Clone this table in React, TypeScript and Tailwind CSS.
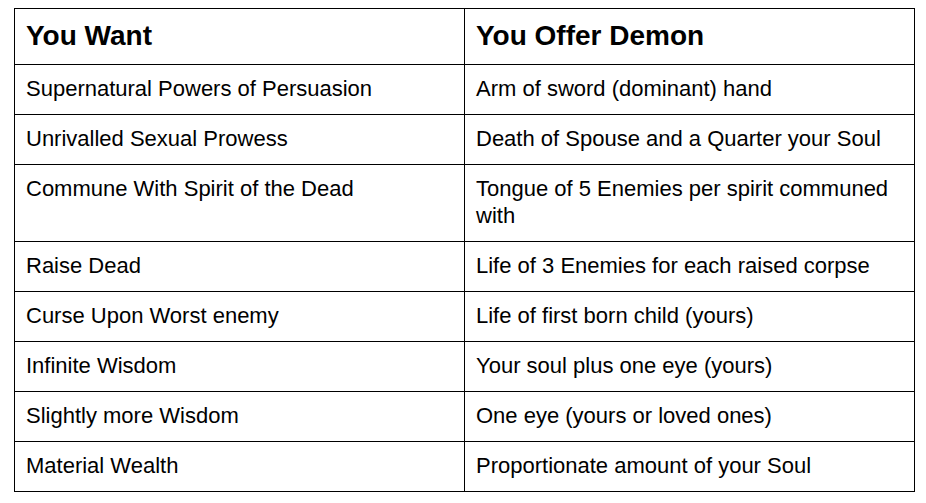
export default function App() {
  const rows = [
    ["Supernatural Powers of Persuasion", "Arm of sword (dominant) hand"],
    ["Unrivalled Sexual Prowess", "Death of Spouse and a Quarter your Soul"],
    ["Commune With Spirit of the Dead", "Tongue of 5 Enemies per spirit communed with"],
    ["Raise Dead", "Life of 3 Enemies for each raised corpse"],
    ["Curse Upon Worst enemy", "Life of first born child (yours)"],
    ["Infinite Wisdom", "Your soul plus one eye (yours)"],
    ["Slightly more Wisdom", "One eye (yours or loved ones)"],
    ["Material Wealth", "Proportionate amount of your Soul"],
  ];

  return (
    <div className="w-[926px] h-[503px] bg-white pt-[8px] pl-[14px] font-['Liberation_Sans',Arial,sans-serif] text-black">
      <table className="w-[901px] border-collapse table-fixed">
        <colgroup>
          <col className="w-[450px]" />
          <col />
        </colgroup>
        <thead>
          <tr>
            <th className="border border-black px-[11px] pt-[11px] pb-[12px] text-left text-[28px] leading-[32px] font-bold">
              You Want
            </th>
            <th className="border border-black px-[11px] pt-[11px] pb-[12px] text-left text-[28px] leading-[32px] font-bold">
              You Offer Demon
            </th>
          </tr>
        </thead>
        <tbody>
          {rows.map(([want, offer]) => (
            <tr key={want}>
              <td className="border border-black px-[11px] pt-[10px] pb-[12px] align-top text-[22px] leading-[27px]">
                {want}
              </td>
              <td className="border border-black px-[11px] pt-[10px] pb-[12px] align-top text-[22px] leading-[27px]">
                {offer}
              </td>
            </tr>
          ))}
        </tbody>
      </table>
    </div>
  );
}
